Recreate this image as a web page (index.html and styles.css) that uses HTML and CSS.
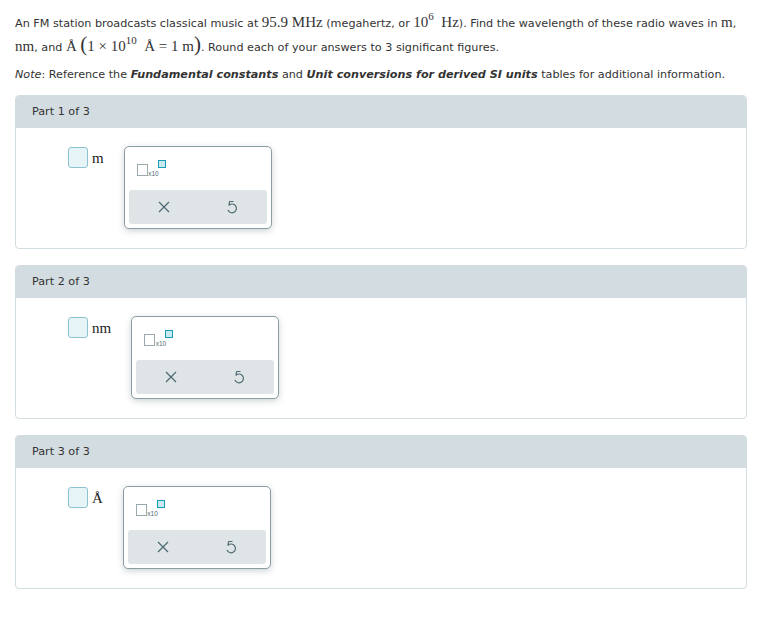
FILE: index.html
```html
<!DOCTYPE html>
<html>
<head>
<meta charset="utf-8">
<link rel="stylesheet" href="styles.css">
</head>
<body>
<div class="page">
  <p class="q">An FM station broadcasts classical music at <span class="m">95.9&nbsp;MHz</span> (megahertz, or <span class="m">10<sup>6</sup>&nbsp; Hz</span>). Find the wavelength of these radio waves in <span class="m">m</span>,<br>
  <span class="m">nm</span>, and <span class="m">Å</span> <span class="m"><span class="paren">(</span>1 × 10<sup>10</sup>&nbsp; Å = 1 m<span class="paren">)</span></span>. Round each of your answers to 3 significant figures.</p>
  <p class="note"><i>Note</i>: Reference the <b><i>Fundamental constants</i></b> and <b><i>Unit conversions for derived SI units</i></b> tables for additional information.</p>

  <div class="card">
    <div class="card-head">Part 1 of 3</div>
    <div class="card-body">
      <div class="ans"><span class="box"></span><span class="unit">m</span></div>
      <div class="pop">
        <div class="tpl"><span class="tb"></span><span class="tx">x10</span><span class="te"></span></div>
        <div class="bar">
          <svg class="ic" width="12" height="12" viewBox="0 0 12 12"><path d="M1 1L11 11M11 1L1 11" stroke="#4f6a72" stroke-width="1.3" fill="none"/></svg>
          <svg class="ic" width="12" height="14" viewBox="0 0 12 14"><path d="M7.5 1.5H3.6L3 5.2A4.4 4.4 0 1 1 1.9 9.9" stroke="#4f6a72" stroke-width="1.2" fill="none" stroke-linejoin="round"/></svg>
        </div>
      </div>
    </div>
  </div>

  <div class="card">
    <div class="card-head">Part 2 of 3</div>
    <div class="card-body">
      <div class="ans"><span class="box"></span><span class="unit">nm</span></div>
      <div class="pop">
        <div class="tpl"><span class="tb"></span><span class="tx">x10</span><span class="te"></span></div>
        <div class="bar">
          <svg class="ic" width="12" height="12" viewBox="0 0 12 12"><path d="M1 1L11 11M11 1L1 11" stroke="#4f6a72" stroke-width="1.3" fill="none"/></svg>
          <svg class="ic" width="12" height="14" viewBox="0 0 12 14"><path d="M7.5 1.5H3.6L3 5.2A4.4 4.4 0 1 1 1.9 9.9" stroke="#4f6a72" stroke-width="1.2" fill="none" stroke-linejoin="round"/></svg>
        </div>
      </div>
    </div>
  </div>

  <div class="card">
    <div class="card-head">Part 3 of 3</div>
    <div class="card-body">
      <div class="ans"><span class="box"></span><span class="unit">Å</span></div>
      <div class="pop">
        <div class="tpl"><span class="tb"></span><span class="tx">x10</span><span class="te"></span></div>
        <div class="bar">
          <svg class="ic" width="12" height="12" viewBox="0 0 12 12"><path d="M1 1L11 11M11 1L1 11" stroke="#4f6a72" stroke-width="1.3" fill="none"/></svg>
          <svg class="ic" width="12" height="14" viewBox="0 0 12 14"><path d="M7.5 1.5H3.6L3 5.2A4.4 4.4 0 1 1 1.9 9.9" stroke="#4f6a72" stroke-width="1.2" fill="none" stroke-linejoin="round"/></svg>
        </div>
      </div>
    </div>
  </div>
</div>
</body>
</html>
```

FILE: styles.css
```css
html, body {
  margin: 0;
  padding: 0;
  background: #ffffff;
}
body {
  font-family: "DejaVu Sans", Verdana, sans-serif;
  font-size: 11.2px;
  color: #333333;
}
.page {
  padding: 11px 28px 0 15px;
}
.q {
  margin: 0;
  line-height: 23px;
  white-space: nowrap;
}
.m {
  font-family: "Liberation Serif", "Times New Roman", serif;
  font-size: 15px;
}
.m sup {
  font-size: 11px;
  vertical-align: 7px;
  line-height: 0;
}
.paren {
  font-size: 21px;
  line-height: 0;
}
.note {
  margin: 8px 0 12px;
  line-height: 16px;
  white-space: nowrap;
}
.card {
  border: 1px solid #d3dce0;
  border-radius: 4px;
  margin-bottom: 16px;
  height: 152px;
  overflow: hidden;
}
.card-head {
  background: #d3dce0;
  height: 32px;
  line-height: 32px;
  padding-left: 16px;
  font-size: 11.2px;
  color: #333;
}
.card-body {
  display: flex;
  align-items: flex-start;
  padding: 18px 0 0 52px;
}
.ans {
  display: flex;
  align-items: flex-start;
  margin-top: 1px;
}
.box {
  width: 18px;
  height: 19px;
  border: 1.5px solid #8cc3cf;
  border-radius: 3px;
  background: #e6f4f8;
}
.unit {
  font-family: "Liberation Serif", "Times New Roman", serif;
  font-size: 15px;
  margin-left: 4px;
  margin-top: 3px;
  color: #222;
}
.pop {
  margin-left: 20px;
  border: 1px solid #8a9da3;
  border-radius: 5px;
  box-shadow: 0 2px 6px rgba(60, 80, 90, 0.25);
  background: #fff;
  display: flex;
  flex-direction: column;
  padding: 0 4px 4px 4px;
  box-sizing: content-box;
  width: 138px;
  height: 77px;
}
.tpl {
  display: flex;
  align-items: flex-start;
  height: 43px;
  padding-left: 8px;
  padding-top: 13px;
  box-sizing: border-box;
}
.tb {
  width: 9px;
  height: 10px;
  border: 1.5px solid #9aa9ad;
  margin-top: 4px;
}
.tx {
  font-family: "Liberation Sans", Arial, sans-serif;
  font-size: 6.5px;
  color: #4f6a72;
  margin-top: 10px;
  margin-left: 0.5px;
}
.te {
  width: 6px;
  height: 6px;
  border: 1px solid #1a9bb8;
  background: #c9e9f0;
  margin-left: -1px;
}
.bar {
  flex: 1;
  background: #dfe5e7;
  border-radius: 3px;
  display: flex;
  align-items: center;
  justify-content: space-between;
  padding: 0 29px;
}
.ic {
  display: block;
}
```
